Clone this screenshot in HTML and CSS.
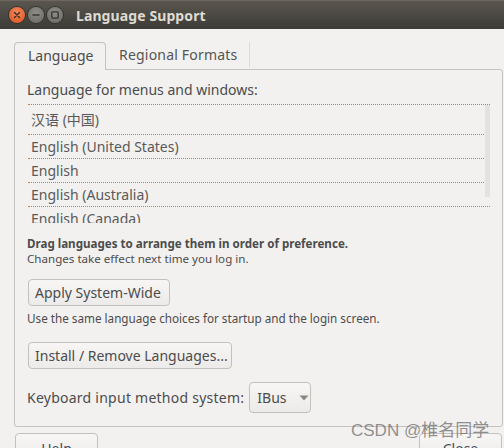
FILE: index.html
```html
<!DOCTYPE html>
<html>
<head>
<meta charset="utf-8">
<link rel="stylesheet" href="styles.css">
</head>
<body>
<div class="window">
  <div class="titlebar">
    <div class="wbtns">
      <span class="wbtn close"><svg width="16" height="16" viewBox="0 0 16 16"><path d="M5.5 5.5 L10.5 10.5 M10.5 5.5 L5.5 10.5" stroke="#3a2a22" stroke-width="1.4" stroke-linecap="round"/></svg></span>
      <span class="wbtn"><svg width="16" height="16" viewBox="0 0 16 16"><path d="M4.5 8 H11.5" stroke="#33322e" stroke-width="1.4"/></svg></span>
      <span class="wbtn"><svg width="16" height="16" viewBox="0 0 16 16"><rect x="4.8" y="4.8" width="6.4" height="6.4" rx="1" fill="none" stroke="#33322e" stroke-width="1.3"/></svg></span>
    </div>
    <div class="title">Language Support</div>
  </div>
  <div class="content">
    <div class="tabs">
      <div class="tab active">Language</div>
      <div class="tab">Regional Formats</div>
    </div>
    <div class="panel">
      <div class="label">Language for menus and windows:</div>
      <div class="listwrap">
        <ul class="list">
          <li class="first">汉语 (中国)</li>
          <li>English (United States)</li>
          <li>English</li>
          <li>English (Australia)</li>
          <li>English (Canada)</li>
        </ul>
        <div class="scrollbar"></div>
      </div>
      <div class="hint"><b>Drag languages to arrange them in order of preference.</b><br>Changes take effect next time you log in.</div>
      <button class="btn apply">Apply System-Wide</button>
      <div class="note">Use the same language choices for startup and the login screen.</div>
      <button class="btn install">Install / Remove Languages...</button>
      <div class="kbd">
        <span class="kbdlabel">Keyboard input method system:</span>
        <span class="combo">IBus <svg class="arrow" width="10" height="6" viewBox="0 0 10 6"><path d="M0.5 0.5 H9.5 L5 5.5 Z" fill="#8a8883"/></svg></span>
      </div>
    </div>
    <div class="footer">
      <button class="btn fbtn">Help</button>
      <button class="btn fbtn">Close</button>
    </div>
  </div>
  <div class="watermark">CSDN @椎名同学</div>
</div>
</body>
</html>
```
FILE: styles.css
```css
html, body {
  margin: 0;
  padding: 0;
  background: #f2f1f0;
}
body {
  width: 504px;
  height: 448px;
  overflow: hidden;
  font-family: "Noto Sans", "Noto Sans CJK SC", sans-serif;
  color: #4c4c4c;
}
.window {
  position: relative;
  width: 504px;
  height: 448px;
  overflow: hidden;
}
.titlebar {
  height: 29px;
  background: linear-gradient(#5a564f, #3c3b37);
  border-top: 1px solid #6b675f;
  box-sizing: border-box;
  display: flex;
  align-items: center;
  padding-left: 9px;
}
.wbtns {
  display: flex;
  gap: 3px;
}
.wbtn {
  width: 16px;
  height: 16px;
  border-radius: 50%;
  background: radial-gradient(circle at 50% 35%, #8f8d87, #6a6863);
  box-shadow: 0 0 0 1px #34332f;
  display: flex;
}
.wbtn.close {
  background: radial-gradient(circle at 50% 35%, #f58a5a, #d8501f);
}
.title {
  margin-left: 13px;
  color: #dfdbd2;
  font-weight: bold;
  font-size: 14px;
  letter-spacing: 0.1px;
}
.content {
  padding: 13px 0 0 14px;
}
.tabs {
  display: flex;
  height: 27px;
  position: relative;
  z-index: 1;
}
.tab {
  font-size: 14px;
  line-height: 26px;
  box-sizing: border-box;
  white-space: nowrap;
}
.tab.active {
  width: 92px;
  height: 28px;
  border: 1px solid #c6c3be;
  border-bottom: none;
  border-radius: 4px 4px 0 0;
  background: #f2f1f0;
  padding-left: 13px;
}
.tab + .tab {
  padding: 0 12px 0 13px;
  width: 144px;
  height: 25px;
  border-right: 1px solid #dcdad6;
  color: #555;
  letter-spacing: 0.2px;
}
.panel {
  width: 489px;
  height: 358px;
  box-sizing: border-box;
  border: 1px solid #c6c3be;
  border-radius: 0 3px 3px 3px;
  padding: 10px 0 0 12px;
}
.label {
  font-size: 14px;
  line-height: 20px;
}
.listwrap {
  position: relative;
  margin-top: 4px;
  width: 462px;
  height: 119px;
  overflow: hidden;
  margin-left: 1px;
}
.list {
  list-style: none;
  margin: 0;
  padding: 0;
  border-top: 1px dotted #e8703a;
}
.list li {
  height: 23px;
  line-height: 23px;
  border-bottom: 1px dotted #e8703a;
  font-size: 14px;
  padding-left: 3px;
  color: #5a5a5a;
}
.list li.first {
  height: 29px;
  line-height: 30px;
}
.scrollbar {
  position: absolute;
  right: 0;
  top: 1px;
  width: 5px;
  height: 92px;
  background: #e3e2e0;
}
.hint {
  margin-top: 13px;
  font-size: 11.6px;
  line-height: 15px;
}
.btn {
  display: block;
  font-family: inherit;
  font-size: 14px;
  color: #4c4c4c;
  background: linear-gradient(#f7f6f5, #edebe9);
  border: 1px solid #c4c1bc;
  border-radius: 4px;
  padding: 0 6px;
  height: 27px;
  margin-left: 1px;
  white-space: nowrap;
  text-align: left;
}
.apply {
  margin-top: 13px;
  width: 142px;
}
.note {
  margin-top: 5px;
  font-size: 11.7px;
  line-height: 15px;
}
.install {
  margin-top: 16px;
  width: 204px;
}
.kbd {
  margin-top: 13px;
  display: flex;
  align-items: center;
  gap: 5px;
}
.kbdlabel {
  font-size: 14px;
  letter-spacing: 0.25px;
}
.combo {
  box-sizing: border-box;
  width: 62px;
  height: 31px;
  border: 1px solid #c4c1bc;
  border-radius: 4px;
  background: linear-gradient(#f7f6f5, #edebe9);
  font-size: 14px;
  display: flex;
  align-items: center;
  padding-left: 7px;
  gap: 12px;
}
.footer {
  display: flex;
  justify-content: space-between;
  margin-top: 6px;
  width: 488px;
}
.fbtn {
  width: 83px;
  height: 30px;
  color: #3f4c5e;
  text-align: center;
}
.watermark {
  position: absolute;
  left: 351px;
  top: 416px;
  font-family: "Liberation Sans", "Noto Sans CJK SC", sans-serif;
  font-size: 17px;
  color: rgba(110, 110, 110, 0.75);
  white-space: nowrap;
}
```
